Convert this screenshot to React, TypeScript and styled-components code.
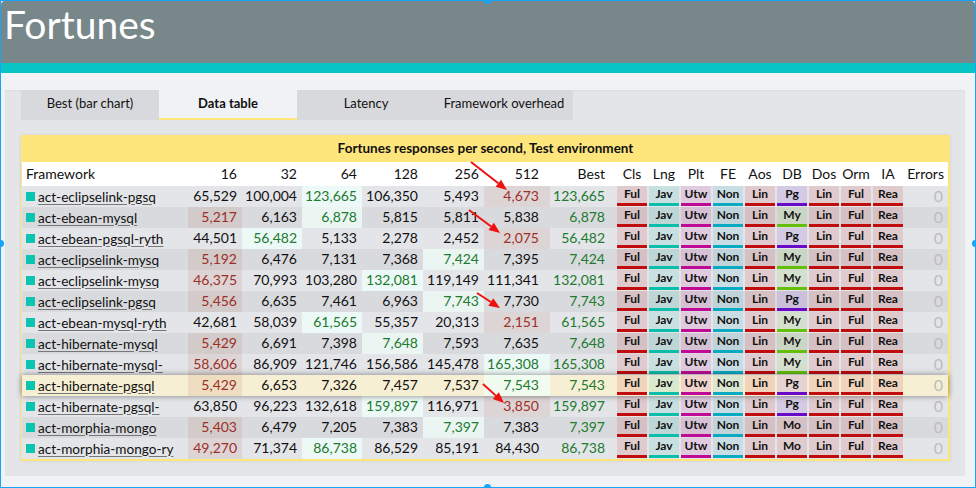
import styled, { createGlobalStyle } from "styled-components";

const GlobalStyle = createGlobalStyle`
  html, body { margin: 0; padding: 0; background: #f0f2f6; }
  body { font-family: "Lato", "Noto Sans", sans-serif; color: #111; }
`;

type Mark = "low" | "high" | undefined;
type Row = { name: string; nums: string[]; low: number; high: number; db: "Pg" | "My" | "Mo" };

const rows: Row[] = [
  { name: "act-eclipselink-pgsq", nums: ["65,529", "100,004", "123,665", "106,350", "5,493", "4,673", "123,665"], low: 5, high: 2, db: "Pg" },
  { name: "act-ebean-mysql", nums: ["5,217", "6,163", "6,878", "5,815", "5,811", "5,838", "6,878"], low: 0, high: 2, db: "My" },
  { name: "act-ebean-pgsql-ryth", nums: ["44,501", "56,482", "5,133", "2,278", "2,452", "2,075", "56,482"], low: 5, high: 1, db: "Pg" },
  { name: "act-eclipselink-mysq", nums: ["5,192", "6,476", "7,131", "7,368", "7,424", "7,395", "7,424"], low: 0, high: 4, db: "My" },
  { name: "act-eclipselink-mysq", nums: ["46,375", "70,993", "103,280", "132,081", "119,149", "111,341", "132,081"], low: 0, high: 3, db: "My" },
  { name: "act-eclipselink-pgsq", nums: ["5,456", "6,635", "7,461", "6,963", "7,743", "7,730", "7,743"], low: 0, high: 4, db: "Pg" },
  { name: "act-ebean-mysql-ryth", nums: ["42,681", "58,039", "61,565", "55,357", "20,313", "2,151", "61,565"], low: 5, high: 2, db: "My" },
  { name: "act-hibernate-mysql", nums: ["5,429", "6,691", "7,398", "7,648", "7,593", "7,635", "7,648"], low: 0, high: 3, db: "My" },
  { name: "act-hibernate-mysql-", nums: ["58,606", "86,909", "121,746", "156,586", "145,478", "165,308", "165,308"], low: 0, high: 5, db: "My" },
  { name: "act-hibernate-pgsql", nums: ["5,429", "6,653", "7,326", "7,457", "7,537", "7,543", "7,543"], low: 0, high: 5, db: "Pg" },
  { name: "act-hibernate-pgsql-", nums: ["63,850", "96,223", "132,618", "159,897", "116,971", "3,850", "159,897"], low: 5, high: 3, db: "Pg" },
  { name: "act-morphia-mongo", nums: ["5,403", "6,479", "7,205", "7,383", "7,397", "7,383", "7,397"], low: 0, high: 4, db: "Mo" },
  { name: "act-morphia-mongo-ry", nums: ["49,270", "71,374", "86,738", "86,529", "85,191", "84,430", "86,738"], low: 0, high: 2, db: "Mo" },
];

const numHeads = ["16", "32", "64", "128", "256", "512", "Best"];
const tagHeads = ["Cls", "Lng", "Plt", "FE", "Aos", "DB", "Dos", "Orm", "IA"];
const pads = [5, 5, 5, 5, 5, 11, 12];

const red = "192, 12, 12";
const teal = "10, 190, 170";
const magenta = "190, 10, 150";
const cyan = "10, 170, 195";
const purple = "105, 10, 200";
const lime = "100, 190, 10";

const dbColor = { Pg: purple, My: lime, Mo: red };

const tagsFor = (db: Row["db"]) => [
  { label: "Ful", color: red },
  { label: "Jav", color: teal },
  { label: "Utw", color: magenta },
  { label: "Non", color: cyan },
  { label: "Lin", color: red },
  { label: db, color: dbColor[db] },
  { label: "Lin", color: red },
  { label: "Ful", color: red },
  { label: "Rea", color: red },
];

const columns = "166px 54px 60px 60px 61px 61px 66px 67px repeat(9, 32px) 43px";

const Frame = styled.div`
  position: relative;
  box-sizing: border-box;
  width: 976px;
  height: 488px;
  overflow: hidden;
  border: 1px solid #16a4f6;
  background: #f0f2f6;
`;

const Header = styled.header`
  box-sizing: border-box;
  height: 62px;
  padding-left: 3px;
  background: #78888a;
  border-radius: 4px 4px 0 0;
`;

const Title = styled.h1`
  margin: 0;
  font-size: 39px;
  line-height: 46px;
  font-weight: 400;
  color: #fff;
`;

const Stripe = styled.div`
  height: 10px;
  background: #08c4c6;
`;

const Body = styled.main`
  padding: 17px 10px 0 4px;
`;

const Panel = styled.section`
  box-sizing: border-box;
  height: 386px;
  padding: 0 16px;
  background: #e4e5e9;
  box-shadow: inset 0 1px 2px rgba(0, 0, 0, 0.04);
`;

const Tabs = styled.nav`
  display: flex;
  height: 30px;
  margin-bottom: 15px;
`;

const Tab = styled.div<{ $active?: boolean }>`
  box-sizing: border-box;
  width: 138px;
  height: 30px;
  text-align: center;
  font-size: 13px;
  line-height: 27px;
  font-weight: ${(p) => (p.$active ? 700 : 400)};
  background: ${(p) => (p.$active ? "#f0f2f6" : "#d8d9dc")};
  border-bottom: 2px solid ${(p) => (p.$active ? "#fee57c" : "#d8d9dc")};
`;

const TableBox = styled.div`
  box-sizing: border-box;
  width: 929px;
  border: solid #fee57c;
  border-width: 0 2px 2px 1px;
  box-shadow: 0 0 3px rgba(0, 0, 0, 0.1);
`;

const Caption = styled.div`
  height: 27px;
  margin: 0 -2px 0 -1px;
  background: #fee57c;
  text-align: center;
  font-size: 13.5px;
  font-weight: 700;
  line-height: 27px;
`;

const GridRow = styled.div`
  display: grid;
  grid-template-columns: ${columns};
  height: 21px;
`;

const HeadRow = styled(GridRow)`
  height: 24px;
  background: #fff;
  font-size: 14px;
  line-height: 24px;
`;

const DataRow = styled(GridRow)<{ $even: boolean; $hot: boolean }>`
  position: relative;
  z-index: ${(p) => (p.$hot ? 1 : 0)};
  background: ${(p) => (p.$hot ? "#f6efd3" : p.$even ? "#d9dadd" : "#e4e5e9")};
  box-shadow: ${(p) => (p.$hot ? "0 0 6px rgba(0, 0, 0, 0.45)" : "none")};
  font-size: 14px;
  line-height: 20px;
`;

const HeadName = styled.div`
  padding-left: 4px;
`;

const HeadNum = styled.div<{ $pad: number }>`
  text-align: right;
  padding-right: ${(p) => p.$pad}px;
`;

const HeadTag = styled.div`
  padding-right: 2px;
  text-align: center;
`;

const HeadErrors = styled.div`
  padding-right: 4px;
  text-align: right;
`;

const NameCell = styled.div`
  display: flex;
  align-items: center;
  gap: 3px;
  padding-left: 4px;
`;

const Swatch = styled.span`
  width: 9px;
  height: 9px;
  background: #0cc4b0;
`;

const NameLink = styled.a`
  color: #111;
  font-size: 13.6px;
  text-decoration: underline;
  text-decoration-color: #777;
  text-underline-offset: 2px;
`;

const NumCell = styled.div<{ $pad: number; $mark: Mark; $best?: boolean }>`
  text-align: right;
  padding-right: ${(p) => p.$pad}px;
  color: ${(p) => (p.$mark === "low" ? "#9c3028" : p.$mark === "high" || p.$best ? "#207a30" : "#111")};
  background: ${(p) =>
    p.$mark === "low"
      ? "rgba(170, 70, 40, 0.1)"
      : p.$mark === "high"
        ? "rgba(240, 255, 250, 0.75)"
        : "transparent"};
`;

const TagCell = styled.div`
  padding-right: 2px;
`;

const Tag = styled.div<{ $color: string }>`
  box-sizing: border-box;
  height: 20px;
  text-align: center;
  font-size: 12px;
  font-weight: 700;
  line-height: 15px;
  background: rgba(${(p) => p.$color}, 0.12);
  border-bottom: 3px solid rgb(${(p) => p.$color});
`;

const Errors = styled.div`
  padding-right: 5px;
  text-align: right;
  color: #bdbdbd;
  font-size: 16px;
`;

const Arrows = styled.svg`
  position: absolute;
  left: -1px;
  top: -1px;
  z-index: 2;
  pointer-events: none;
`;

const Handle = styled.span<{ $x: number; $y: number }>`
  position: absolute;
  left: ${(p) => p.$x}px;
  top: ${(p) => p.$y}px;
  z-index: 3;
  width: 7px;
  height: 7px;
  border-radius: 50%;
  background: #16a4f6;
`;

const arrows = [
  [471, 162, 507, 190],
  [469, 210, 500, 233],
  [477, 293, 500, 308],
  [483, 384, 504, 403],
];

function Arrow({ line }: { line: number[] }) {
  const [x1, y1, x2, y2] = line;
  const a = Math.atan2(y2 - y1, x2 - x1);
  const l = 11;
  const w = 4.5;
  const bx = x2 - l * Math.cos(a);
  const by = y2 - l * Math.sin(a);
  const px = -Math.sin(a) * w;
  const py = Math.cos(a) * w;
  return (
    <g>
      <line x1={x1} y1={y1} x2={bx} y2={by} stroke="#f01010" strokeWidth={2} />
      <polygon points={`${x2},${y2} ${bx + px},${by + py} ${bx - px},${by - py}`} fill="#f01010" />
    </g>
  );
}

export default function App() {
  return (
    <Frame>
      <GlobalStyle />
      <Header>
        <Title>Fortunes</Title>
      </Header>
      <Stripe />
      <Body>
        <Panel>
          <Tabs>
            <Tab>Best (bar chart)</Tab>
            <Tab $active>Data table</Tab>
            <Tab>Latency</Tab>
            <Tab>Framework overhead</Tab>
          </Tabs>
          <TableBox>
            <Caption>Fortunes responses per second, Test environment</Caption>
            <HeadRow>
              <HeadName>Framework</HeadName>
              {numHeads.map((h, i) => (
                <HeadNum key={h} $pad={pads[i]}>
                  {h}
                </HeadNum>
              ))}
              {tagHeads.map((h) => (
                <HeadTag key={h}>{h}</HeadTag>
              ))}
              <HeadErrors>Errors</HeadErrors>
            </HeadRow>
            {rows.map((row, r) => (
              <DataRow key={r} $even={r % 2 === 1} $hot={r === 9}>
                <NameCell>
                  <Swatch />
                  <NameLink>{row.name}</NameLink>
                </NameCell>
                {row.nums.map((n, i) => (
                  <NumCell
                    key={i}
                    $pad={pads[i]}
                    $best={i === 6}
                    $mark={i === 6 ? undefined : i === row.low ? "low" : i === row.high ? "high" : undefined}
                  >
                    {n}
                  </NumCell>
                ))}
                {tagsFor(row.db).map((t, i) => (
                  <TagCell key={i}>
                    <Tag $color={t.color}>{t.label}</Tag>
                  </TagCell>
                ))}
                <Errors>0</Errors>
              </DataRow>
            ))}
          </TableBox>
        </Panel>
      </Body>
      <Arrows width={976} height={488}>
        {arrows.map((line, i) => (
          <Arrow key={i} line={line} />
        ))}
      </Arrows>
      <Handle $x={-4} $y={239} />
      <Handle $x={483} $y={-4} />
      <Handle $x={971} $y={239} />
      <Handle $x={483} $y={483} />
    </Frame>
  );
}
